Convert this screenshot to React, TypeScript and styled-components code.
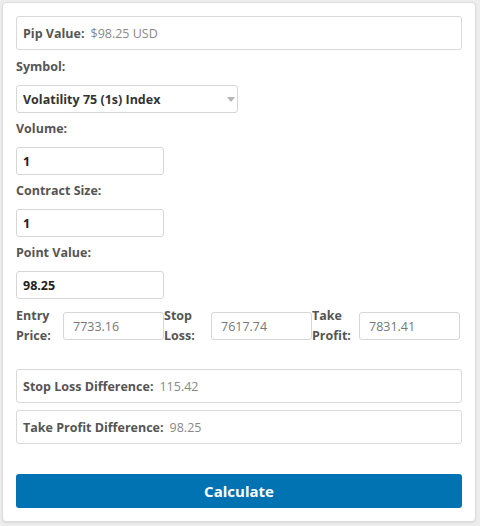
import React, { useState } from 'react';
import styled, { createGlobalStyle } from 'styled-components';

const GlobalStyle = createGlobalStyle`
  html, body {
    margin: 0;
    padding: 0;
    background: #ededed;
  }
  body {
    font-family: 'Open Sans', 'Liberation Sans', sans-serif;
  }
  * {
    box-sizing: border-box;
  }
`;

const Card = styled.div`
  width: 474px;
  margin: 2px;
  padding: 13px;
  background: #fff;
  border: 1px solid #dcdcdc;
  border-radius: 4px;
  box-shadow: 0 1px 2px rgba(0, 0, 0, 0.08);
  display: flex;
  flex-direction: column;
`;

const InfoBox = styled.div<{ $mt?: number }>`
  display: flex;
  align-items: center;
  gap: 6px;
  height: 34px;
  margin-top: ${(p) => p.$mt ?? 0}px;
  padding: 0 6px;
  border: 1px solid #d9d9d9;
  border-radius: 3px;
  font-size: 12.5px;
`;

const InfoLabel = styled.span`
  font-weight: 700;
  color: #555;
`;

const InfoValue = styled.span`
  color: #888;
`;

const FieldLabel = styled.label<{ $mt?: number }>`
  display: block;
  margin-top: ${(p) => p.$mt ?? 6}px;
  margin-bottom: 8px;
  font-size: 12.5px;
  line-height: 20px;
  font-weight: 700;
  color: #555;
`;

const TextInput = styled.input<{ $width?: number }>`
  width: ${(p) => p.$width ?? 148}px;
  height: 28px;
  padding: 0 6px;
  border: 1px solid #d6d6d6;
  border-radius: 3px;
  font-family: inherit;
  font-size: 12.5px;
  font-weight: 700;
  color: #222;
  outline: none;
`;

const SelectWrap = styled.div`
  position: relative;
  width: 222px;
`;

const Select = styled.select`
  appearance: none;
  width: 100%;
  height: 28px;
  padding: 0 20px 0 6px;
  border: 1px solid #d6d6d6;
  border-radius: 3px;
  background: #fff;
  font-family: inherit;
  font-size: 12.5px;
  font-weight: 700;
  color: #333;
  outline: none;
`;

const Caret = styled.span`
  position: absolute;
  right: 3px;
  top: 12px;
  width: 0;
  height: 0;
  border-left: 4px solid transparent;
  border-right: 4px solid transparent;
  border-top: 5px solid #b5b5b5;
  pointer-events: none;
`;

const PriceRow = styled.div`
  display: grid;
  grid-template-columns: repeat(3, 1fr);
  margin-top: 7px;
  width: 444px;
`;

const PriceCell = styled.div`
  display: flex;
  align-items: center;
`;

const PriceLabel = styled.label`
  width: 47px;
  flex-shrink: 0;
  font-size: 12.5px;
  line-height: 20px;
  font-weight: 700;
  color: #555;
`;

const PriceInput = styled.input`
  width: 101px;
  height: 28px;
  padding: 0 9px;
  border: 1px solid #d6d6d6;
  border-radius: 3px;
  font-family: inherit;
  font-size: 12.5px;
  color: #777;
  outline: none;
`;

const CalcButton = styled.button`
  height: 34px;
  margin-top: 30px;
  border: none;
  border-radius: 3px;
  background: #0273b2;
  color: #fff;
  font-family: inherit;
  font-size: 15px;
  font-weight: 700;
  cursor: pointer;
`;

export default function App() {
  const [volume, setVolume] = useState('1');
  const [contract, setContract] = useState('1');
  const [point, setPoint] = useState('98.25');
  const [entry, setEntry] = useState('7733.16');
  const [stop, setStop] = useState('7617.74');
  const [take, setTake] = useState('7831.41');

  return (
    <>
      <GlobalStyle />
      <Card>
        <InfoBox>
          <InfoLabel>Pip Value:</InfoLabel>
          <InfoValue>$98.25 USD</InfoValue>
        </InfoBox>

        <FieldLabel $mt={7}>Symbol:</FieldLabel>
        <SelectWrap>
          <Select defaultValue="v75-1s">
            <option value="v75-1s">Volatility 75 (1s) Index</option>
          </Select>
          <Caret />
        </SelectWrap>

        <FieldLabel>Volume:</FieldLabel>
        <TextInput value={volume} onChange={(e) => setVolume(e.target.value)} />

        <FieldLabel>Contract Size:</FieldLabel>
        <TextInput value={contract} onChange={(e) => setContract(e.target.value)} />

        <FieldLabel>Point Value:</FieldLabel>
        <TextInput value={point} onChange={(e) => setPoint(e.target.value)} />

        <PriceRow>
          <PriceCell>
            <PriceLabel>Entry Price:</PriceLabel>
            <PriceInput value={entry} onChange={(e) => setEntry(e.target.value)} />
          </PriceCell>
          <PriceCell>
            <PriceLabel>Stop Loss:</PriceLabel>
            <PriceInput value={stop} onChange={(e) => setStop(e.target.value)} />
          </PriceCell>
          <PriceCell>
            <PriceLabel>Take Profit:</PriceLabel>
            <PriceInput value={take} onChange={(e) => setTake(e.target.value)} />
          </PriceCell>
        </PriceRow>

        <InfoBox $mt={23}>
          <InfoLabel>Stop Loss Difference:</InfoLabel>
          <InfoValue>115.42</InfoValue>
        </InfoBox>
        <InfoBox $mt={7}>
          <InfoLabel>Take Profit Difference:</InfoLabel>
          <InfoValue>98.25</InfoValue>
        </InfoBox>

        <CalcButton>Calculate</CalcButton>
      </Card>
    </>
  );
}
